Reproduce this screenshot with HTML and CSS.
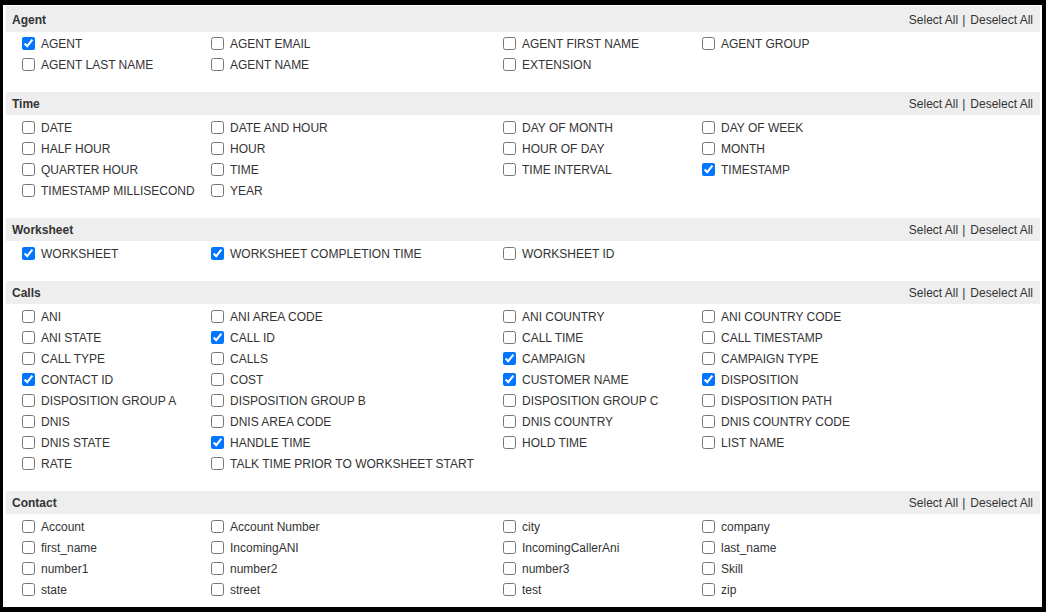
FILE: index.html
```html
<!DOCTYPE html>
<html>
<head>
<meta charset="utf-8">
<link rel="stylesheet" href="styles.css">
</head>
<body>
<div class="panel">
  <section class="group first">
    <div class="group-head"><span class="title">Agent</span><span class="actions"><span>Select All</span><span class="sep">|</span><span>Deselect All</span></span></div>
    <div class="fields">
      <label><input type="checkbox" checked><span>AGENT</span></label>
      <label><input type="checkbox"><span>AGENT EMAIL</span></label>
      <label><input type="checkbox"><span>AGENT FIRST NAME</span></label>
      <label><input type="checkbox"><span>AGENT GROUP</span></label>
      <label><input type="checkbox"><span>AGENT LAST NAME</span></label>
      <label><input type="checkbox"><span>AGENT NAME</span></label>
      <label><input type="checkbox"><span>EXTENSION</span></label>
    </div>
  </section>
  <section class="group">
    <div class="group-head"><span class="title">Time</span><span class="actions"><span>Select All</span><span class="sep">|</span><span>Deselect All</span></span></div>
    <div class="fields">
      <label><input type="checkbox"><span>DATE</span></label>
      <label><input type="checkbox"><span>DATE AND HOUR</span></label>
      <label><input type="checkbox"><span>DAY OF MONTH</span></label>
      <label><input type="checkbox"><span>DAY OF WEEK</span></label>
      <label><input type="checkbox"><span>HALF HOUR</span></label>
      <label><input type="checkbox"><span>HOUR</span></label>
      <label><input type="checkbox"><span>HOUR OF DAY</span></label>
      <label><input type="checkbox"><span>MONTH</span></label>
      <label><input type="checkbox"><span>QUARTER HOUR</span></label>
      <label><input type="checkbox"><span>TIME</span></label>
      <label><input type="checkbox"><span>TIME INTERVAL</span></label>
      <label><input type="checkbox" checked><span>TIMESTAMP</span></label>
      <label><input type="checkbox"><span>TIMESTAMP MILLISECOND</span></label>
      <label><input type="checkbox"><span>YEAR</span></label>
    </div>
  </section>
  <section class="group">
    <div class="group-head"><span class="title">Worksheet</span><span class="actions"><span>Select All</span><span class="sep">|</span><span>Deselect All</span></span></div>
    <div class="fields">
      <label><input type="checkbox" checked><span>WORKSHEET</span></label>
      <label><input type="checkbox" checked><span>WORKSHEET COMPLETION TIME</span></label>
      <label><input type="checkbox"><span>WORKSHEET ID</span></label>
    </div>
  </section>
  <section class="group">
    <div class="group-head"><span class="title">Calls</span><span class="actions"><span>Select All</span><span class="sep">|</span><span>Deselect All</span></span></div>
    <div class="fields">
      <label><input type="checkbox"><span>ANI</span></label>
      <label><input type="checkbox"><span>ANI AREA CODE</span></label>
      <label><input type="checkbox"><span>ANI COUNTRY</span></label>
      <label><input type="checkbox"><span>ANI COUNTRY CODE</span></label>
      <label><input type="checkbox"><span>ANI STATE</span></label>
      <label><input type="checkbox" checked><span>CALL ID</span></label>
      <label><input type="checkbox"><span>CALL TIME</span></label>
      <label><input type="checkbox"><span>CALL TIMESTAMP</span></label>
      <label><input type="checkbox"><span>CALL TYPE</span></label>
      <label><input type="checkbox"><span>CALLS</span></label>
      <label><input type="checkbox" checked><span>CAMPAIGN</span></label>
      <label><input type="checkbox"><span>CAMPAIGN TYPE</span></label>
      <label><input type="checkbox" checked><span>CONTACT ID</span></label>
      <label><input type="checkbox"><span>COST</span></label>
      <label><input type="checkbox" checked><span>CUSTOMER NAME</span></label>
      <label><input type="checkbox" checked><span>DISPOSITION</span></label>
      <label><input type="checkbox"><span>DISPOSITION GROUP A</span></label>
      <label><input type="checkbox"><span>DISPOSITION GROUP B</span></label>
      <label><input type="checkbox"><span>DISPOSITION GROUP C</span></label>
      <label><input type="checkbox"><span>DISPOSITION PATH</span></label>
      <label><input type="checkbox"><span>DNIS</span></label>
      <label><input type="checkbox"><span>DNIS AREA CODE</span></label>
      <label><input type="checkbox"><span>DNIS COUNTRY</span></label>
      <label><input type="checkbox"><span>DNIS COUNTRY CODE</span></label>
      <label><input type="checkbox"><span>DNIS STATE</span></label>
      <label><input type="checkbox" checked><span>HANDLE TIME</span></label>
      <label><input type="checkbox"><span>HOLD TIME</span></label>
      <label><input type="checkbox"><span>LIST NAME</span></label>
      <label><input type="checkbox"><span>RATE</span></label>
      <label><input type="checkbox"><span>TALK TIME PRIOR TO WORKSHEET START</span></label>
    </div>
  </section>
  <section class="group">
    <div class="group-head"><span class="title">Contact</span><span class="actions"><span>Select All</span><span class="sep">|</span><span>Deselect All</span></span></div>
    <div class="fields">
      <label><input type="checkbox"><span>Account</span></label>
      <label><input type="checkbox"><span>Account Number</span></label>
      <label><input type="checkbox"><span>city</span></label>
      <label><input type="checkbox"><span>company</span></label>
      <label><input type="checkbox"><span>first_name</span></label>
      <label><input type="checkbox"><span>IncomingANI</span></label>
      <label><input type="checkbox"><span>IncomingCallerAni</span></label>
      <label><input type="checkbox"><span>last_name</span></label>
      <label><input type="checkbox"><span>number1</span></label>
      <label><input type="checkbox"><span>number2</span></label>
      <label><input type="checkbox"><span>number3</span></label>
      <label><input type="checkbox"><span>Skill</span></label>
      <label><input type="checkbox"><span>state</span></label>
      <label><input type="checkbox"><span>street</span></label>
      <label><input type="checkbox"><span>test</span></label>
      <label><input type="checkbox"><span>zip</span></label>
    </div>
  </section>
</div>
</body>
</html>
```

FILE: styles.css
```css
html, body {
  margin: 0;
  padding: 0;
  background: #000;
}
body {
  width: 1046px;
  height: 612px;
  overflow: hidden;
  font-family: "Liberation Sans", Arial, sans-serif;
  font-size: 12px;
  color: #333;
}
.panel {
  margin: 5px 4px 5px 3px;
  height: 602px;
  background: #fff;
  overflow: hidden;
}
.group-head {
  display: flex;
  justify-content: space-between;
  align-items: center;
  height: 23px;
  margin: 0 2px 0 3px;
  padding: 0 7px 0 6px;
  background: #eeeeee;
}
.group.first {
  padding-top: 1px;
}
.group.first .group-head {
  height: 26px;
  padding-top: 1px;
  box-sizing: border-box;
}
.title {
  font-weight: bold;
}
.actions {
  display: flex;
  align-items: center;
}
.sep {
  margin: 0 5px 0 4px;
}
.fields {
  display: grid;
  grid-template-columns: 189px 292px 199px 1fr;
  grid-auto-rows: 21px;
  padding: 2px 0 17px 15px;
}
.group.first .fields {
  padding-top: 1px;
}
.fields label {
  display: flex;
  align-items: center;
  gap: 6px;
  white-space: nowrap;
}
.fields input {
  margin: 0 0 0 4px;
  width: 13px;
  height: 13px;
}
```
